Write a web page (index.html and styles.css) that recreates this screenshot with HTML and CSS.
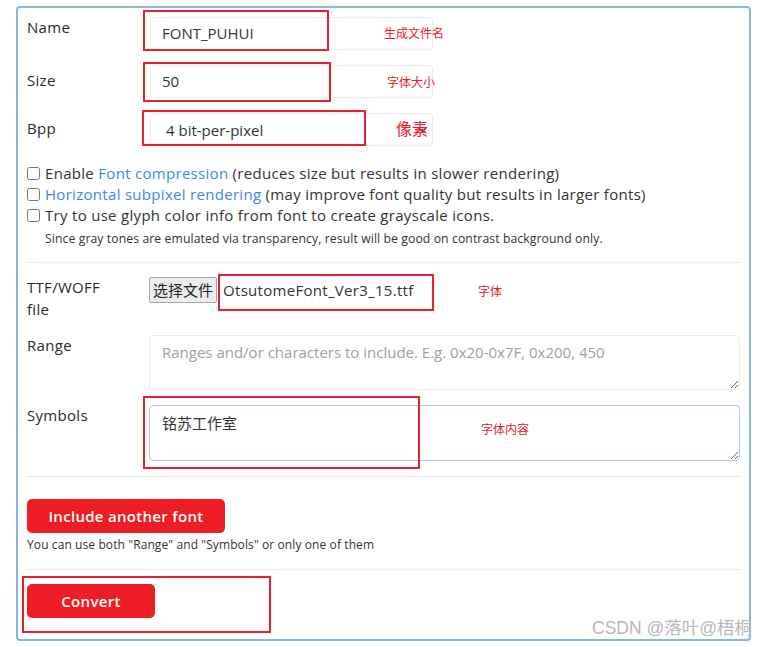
FILE: index.html
```html
<!DOCTYPE html>
<html lang="en">
<head>
<meta charset="utf-8">
<title>Font converter</title>
<link rel="stylesheet" href="styles.css">
</head>
<body>
<div class="panel">
  <div class="row row-name">
    <label class="lbl lbl-top">Name</label>
    <input class="inp" type="text" value="FONT_PUHUI">
  </div>
  <div class="row">
    <label class="lbl">Size</label>
    <input class="inp" type="text" value="50">
  </div>
  <div class="row">
    <label class="lbl">Bpp</label>
    <div class="selwrap">
      <select class="sel"><option>4 bit-per-pixel</option></select>
      <svg class="chev" width="9" height="6" viewBox="0 0 9 6"><path d="M1 1l3.5 3.5L8 1" fill="none" stroke="#444" stroke-width="1.6"/></svg>
    </div>
  </div>

  <div class="checks">
    <label class="chk"><input type="checkbox"><span>Enable <span class="link">Font compression</span> (reduces size but results in slower rendering)</span></label>
    <label class="chk"><input type="checkbox"><span><span class="link">Horizontal subpixel rendering</span> (may improve font quality but results in larger fonts)</span></label>
    <label class="chk"><input type="checkbox"><span>Try to use glyph color info from font to create grayscale icons.</span></label>
    <div class="hint">Since gray tones are emulated via transparency, result will be good on contrast background only.</div>
  </div>

  <hr class="sep">

  <div class="row row-file">
    <label class="lbl lbl-file">TTF/WOFF<br>file</label>
    <div class="file">
      <span class="filebtn">选择文件</span>
      <span class="fname">OtsutomeFont_Ver3_15.ttf</span>
    </div>
  </div>
  <div class="row row-ta">
    <label class="lbl lbl-ta">Range</label>
    <textarea class="ta" placeholder="Ranges and/or characters to include. E.g. 0x20-0x7F, 0x200, 450"></textarea>
  </div>
  <div class="row row-ta">
    <label class="lbl lbl-ta">Symbols</label>
    <textarea class="ta ta-focus">铭苏工作室</textarea>
  </div>

  <hr class="sep sep2">

  <button class="btn btn-include">Include another font</button>
  <div class="help">You can use both "Range" and "Symbols" or only one of them</div>

  <hr class="sep sep3">

  <button class="btn btn-convert">Convert</button>

  <div class="mark m1"></div>
  <div class="mark m2"></div>
  <div class="mark m3"></div>
  <div class="mark m4"></div>
  <div class="mark m5"></div>
  <div class="mark m6"></div>
  <span class="note n1">生成文件名</span>
  <span class="note n2">字体大小</span>
  <span class="note n3">像素</span>
  <span class="note n4">字体</span>
  <span class="note n5">字体内容</span>
</div>
<div class="watermark">CSDN @落叶@梧桐</div>
</body>
</html>
```
FILE: styles.css
```css
* { box-sizing: border-box; }
html, body { margin: 0; padding: 0; background: #fff; }
body {
  font-family: "Open Sans", "Noto Sans CJK SC", sans-serif;
  font-size: 15px;
  letter-spacing: 0.3px;
  color: #333;
  width: 768px;
  height: 647px;
  overflow: hidden;
  position: relative;
}
.panel {
  position: relative;
  margin: 6px 0 0 16px;
  width: 735px;
  height: 635px;
  border: 2px solid #8cb4e2;
  border-radius: 4px;
  padding: 9px 9px 0 9px;
}
.row { display: flex; align-items: flex-start; margin-bottom: 15px; }
.lbl { width: 123px; flex: none; line-height: 20px; padding-top: 5px; color: #2b2b2b; }
.lbl-top { padding-top: 0; }
.inp {
  width: 283px; height: 33px;
  border: 1px solid #ebebeb; border-radius: 4px;
  padding: 0 11px 1px;
  font: inherit; color: #333;
  outline: none; background: #fff;
}
.selwrap { position: relative; width: 283px; height: 33px; }
.sel {
  appearance: none; -webkit-appearance: none;
  width: 100%; height: 100%;
  border: 1px solid #ebebeb; border-radius: 4px;
  padding: 0 15px; font: inherit; color: #333; background: #fff;
}
.chev { position: absolute; right: 6px; top: 14px; }
.checks { padding-top: 2px; margin-bottom: 0; }
.chk { display: flex; align-items: center; line-height: 21px; }
.chk input { margin: 0 5px 0 0; width: 13px; height: 13px; }
.link { color: #3a88f2; }
.hint { font-size: 12.2px; letter-spacing: 0.1px; line-height: 16px; margin-top: 5px; padding-left: 18px; color: #333; }
.sep { border: 0; border-top: 1px solid #e8e8e8; margin: 15px 0 13px; }
.row-file { margin-bottom: 15px; }
.lbl-file { line-height: 22px; padding-top: 0; }
.file { display: flex; align-items: center; margin-left: -1px; padding-top: 1px; }
.filebtn {
  font-family: "Noto Sans CJK SC", sans-serif; font-size: 15px; letter-spacing: 0;
  height: 26px; line-height: 24px; padding: 0 3px;
  background: #ececec; border: 1px solid #a8a8a8; border-radius: 2px; color: #222;
}
.fname { margin-left: 6px; color: #333; }
.row-ta .lbl { padding-top: 0; }
.ta {
  width: 591px; height: 55px; margin-left: -1px;
  border: 1px solid #ebebeb; border-radius: 4px;
  padding: 6px 12px; font: inherit; color: #333; resize: vertical; outline: none;
  font-family: "Open Sans", "Noto Sans CJK SC", sans-serif;
}
.ta::placeholder { color: #a0a0a0; }
.ta-focus { border-color: #a8c8ee; height: 56px; }
.sep2 { margin: 0 0 22px; }
.btn {
  display: block; height: 34px; border: 0; border-radius: 5px;
  background: #ee1c25; color: #fff; font: 600 15px "Open Sans", sans-serif; letter-spacing: 0.3px;
}
.btn-include { width: 198px; }
.help { font-size: 12px; letter-spacing: 0.1px; line-height: 16px; margin-top: 4px; color: #333; }
.sep3 { margin: 16px 0 14px; }
.btn-convert { width: 128px; }

.mark { position: absolute; border: 2px solid #e8202a; }
.m1 { left: 125px; top: 2px; width: 186px; height: 41px; }
.m2 { left: 125px; top: 54px; width: 188px; height: 40px; }
.m3 { left: 124px; top: 102px; width: 224px; height: 36px; }
.m4 { left: 200px; top: 266px; width: 216px; height: 37px; }
.m5 { left: 125px; top: 388px; width: 277px; height: 73px; }
.m6 { left: 4px; top: 568px; width: 249px; height: 57px; }
.note { position: absolute; color: #e8202a; font-family: "Noto Sans CJK SC", sans-serif; font-size: 12px; line-height: 14px; letter-spacing: 0; }
.n1 { left: 366px; top: 18px; }
.n2 { left: 369px; top: 67px; }
.n3 { left: 378px; top: 110px; font-size: 16px; line-height: 20px; }
.n4 { left: 460px; top: 276px; }
.n5 { left: 463px; top: 414px; }
.watermark {
  position: absolute; left: 592px; top: 617px;
  font-family: "Liberation Sans", "Noto Sans CJK SC", sans-serif;
  font-size: 17.5px; line-height: 22px; color: #b8b8b8; letter-spacing: 0;
}
```
